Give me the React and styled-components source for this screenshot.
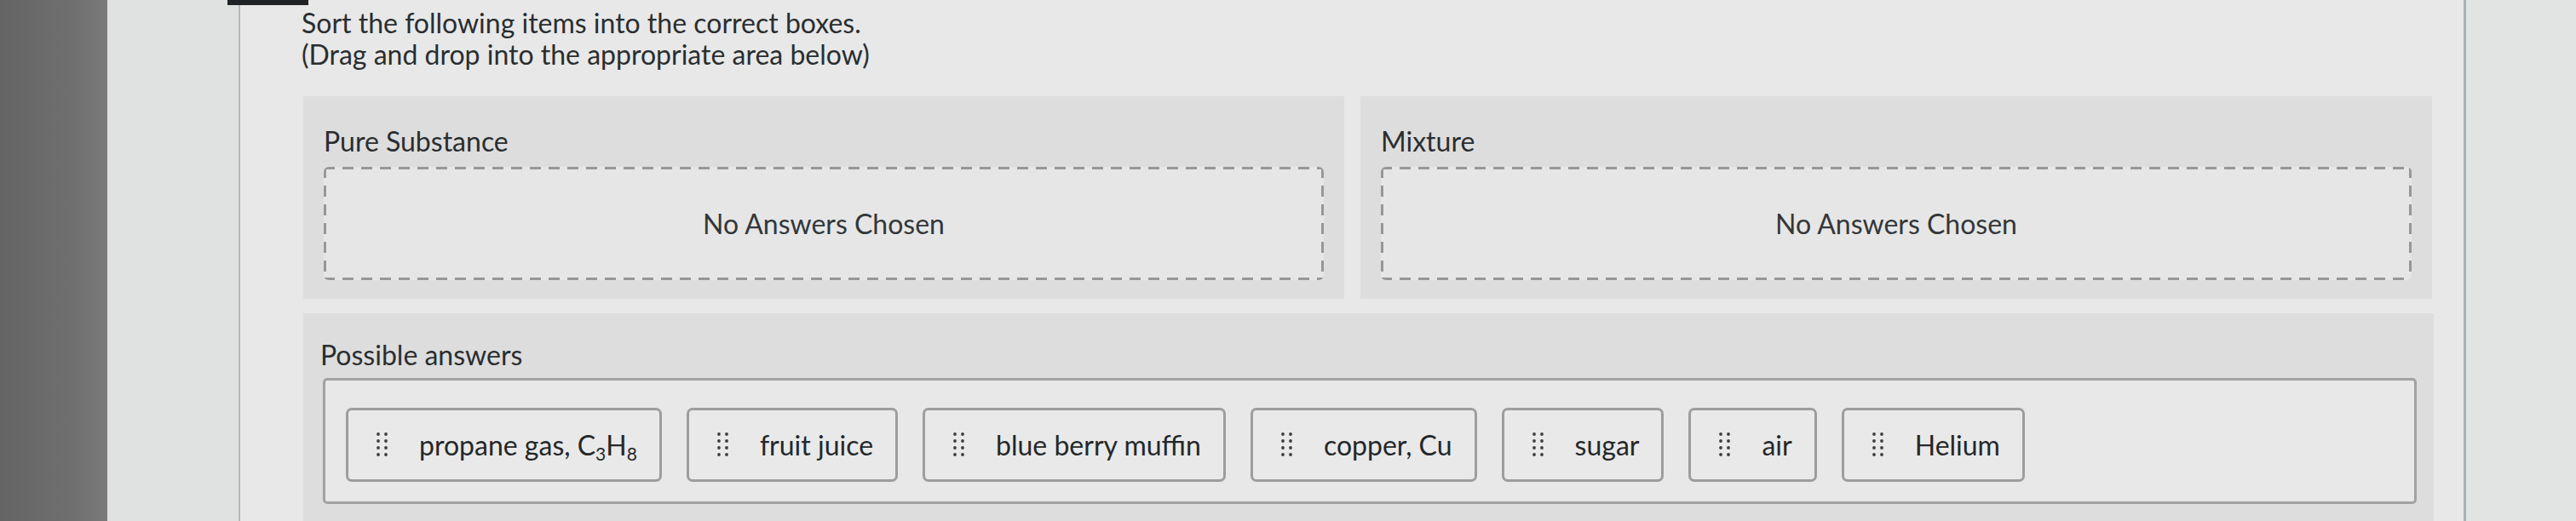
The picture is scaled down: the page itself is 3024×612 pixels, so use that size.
import styled, { createGlobalStyle } from 'styled-components';

const GlobalStyle = createGlobalStyle`
  *, *::before, *::after {
    box-sizing: border-box;
  }
  html, body {
    margin: 0;
    padding: 0;
    background: #e5e5e5;
  }
  body {
    font-family: Lato, "Open Sans", sans-serif;
    color: #2c3032;
  }
`;

const answers = [
  { id: 'propane', label: 'propane gas, C', sub: [['3', 'H'], ['8', '']] },
  { id: 'juice', label: 'fruit juice' },
  { id: 'muffin', label: 'blue berry muffin' },
  { id: 'copper', label: 'copper, Cu' },
  { id: 'sugar', label: 'sugar' },
  { id: 'air', label: 'air' },
  { id: 'helium', label: 'Helium' },
];

const DragHandle = () => (
  <HandleIcon viewBox="0 0 13 30" aria-hidden="true">
    {[0, 1, 2, 3].map((row) =>
      [0, 1].map((col) => (
        <circle key={`${row}-${col}`} cx={2 + col * 9} cy={3 + row * 8} r="1.9" />
      ))
    )}
  </HandleIcon>
);

const App = () => {
  return (
    <>
      <GlobalStyle />
      <Screen>
        <TopTab />
        <Bezel />
        <SideRail />
        <Main>
          <Prompt>
            Sort the following items into the correct boxes.
            <br />
            (Drag and drop into the appropriate area below)
          </Prompt>

          <TargetRow>
            <Panel>
              <PanelLabel>Pure Substance</PanelLabel>
              <DropZone>No Answers Chosen</DropZone>
            </Panel>
            <Panel>
              <PanelLabel>Mixture</PanelLabel>
              <DropZone>No Answers Chosen</DropZone>
            </Panel>
          </TargetRow>

          <AnswerPanel>
            <PanelLabel>Possible answers</PanelLabel>
            <AnswerBox>
              {answers.map((a) => (
                <Chip key={a.id}>
                  <DragHandle />
                  <ChipText>
                    {a.label}
                    {a.sub &&
                      a.sub.map(([s, after]) => (
                        <span key={s}>
                          <sub>{s}</sub>
                          {after}
                        </span>
                      ))}
                  </ChipText>
                </Chip>
              ))}
            </AnswerBox>
          </AnswerPanel>
        </Main>
        <RightArea />
      </Screen>
    </>
  );
};

const Screen = styled.div`
  position: relative;
  display: flex;
  width: 3024px;
  height: 612px;
  overflow: hidden;
`;

const TopTab = styled.div`
  position: absolute;
  top: 0;
  left: 267px;
  width: 95px;
  height: 6px;
  background: #1f2325;
`;

const Bezel = styled.div`
  flex: 0 0 126px;
  background: linear-gradient(90deg, #646464 0%, #707070 70%, #7a7a7a 100%);
`;

const SideRail = styled.div`
  flex: 0 0 156px;
  background: #e0e1e1;
  border-right: 2px solid #b4b8bb;
`;

const Main = styled.main`
  flex: 0 0 2610px;
  display: flex;
  flex-direction: column;
  padding: 8px 35px 0 72px;
  background: #e8e8e8;
`;

const Prompt = styled.p`
  margin: 0;
  font-size: 32px;
  line-height: 37px;
  color: #2a2e30;
`;

const TargetRow = styled.div`
  display: grid;
  grid-template-columns: 1222px 1258px;
  column-gap: 19px;
  margin-top: 31px;
  margin-left: 2px;
`;

const Panel = styled.section`
  display: flex;
  flex-direction: column;
  padding: 35px 24px 22px 24px;
  background: #dddddd;
`;

const PanelLabel = styled.div`
  font-size: 32px;
  line-height: 36px;
  color: #2a2e30;
`;

const dash = '#979797';

const DropZone = styled.div`
  display: flex;
  align-items: center;
  justify-content: center;
  height: 133px;
  margin-top: 12px;
  border-radius: 6px;
  background:
    repeating-linear-gradient(90deg, ${dash} 0 13px, transparent 13px 22px) top left / 100% 3px no-repeat,
    repeating-linear-gradient(90deg, ${dash} 0 13px, transparent 13px 22px) bottom left / 100% 3px no-repeat,
    repeating-linear-gradient(180deg, ${dash} 0 13px, transparent 13px 22px) top left / 3px 100% no-repeat,
    repeating-linear-gradient(180deg, ${dash} 0 13px, transparent 13px 22px) top right / 3px 100% no-repeat,
    #e6e6e6;
  font-size: 32px;
  color: #33373a;
`;

const AnswerPanel = styled.section`
  flex: 1;
  display: flex;
  flex-direction: column;
  margin-top: 17px;
  margin-left: 2px;
  padding: 31px 20px 0 20px;
  background: #dddddd;
`;

const AnswerBox = styled.div`
  display: flex;
  align-items: center;
  gap: 29px;
  height: 148px;
  margin-top: 9px;
  margin-left: 3px;
  padding: 8px 24px 0 24px;
  border: 3px solid #a2a2a2;
  border-radius: 5px;
  background: #e8e8e8;
`;

const Chip = styled.div`
  display: flex;
  align-items: center;
  gap: 37px;
  height: 87px;
  padding: 0 26px 0 33px;
  border: 3px solid #9d9d9d;
  border-radius: 7px;
  background: #e9e9e9;
`;

const HandleIcon = styled.svg`
  width: 13px;
  height: 30px;
  fill: #3b3e40;
  flex-shrink: 0;
`;

const ChipText = styled.span`
  font-size: 32px;
  color: #24282a;
  white-space: nowrap;

  sub {
    font-size: 21px;
    vertical-align: -6px;
    line-height: 0;
  }
`;

const RightArea = styled.div`
  flex: 1;
  background: #e2e3e3;
  border-left: 3px solid #aab0b3;
`;

export default App;
